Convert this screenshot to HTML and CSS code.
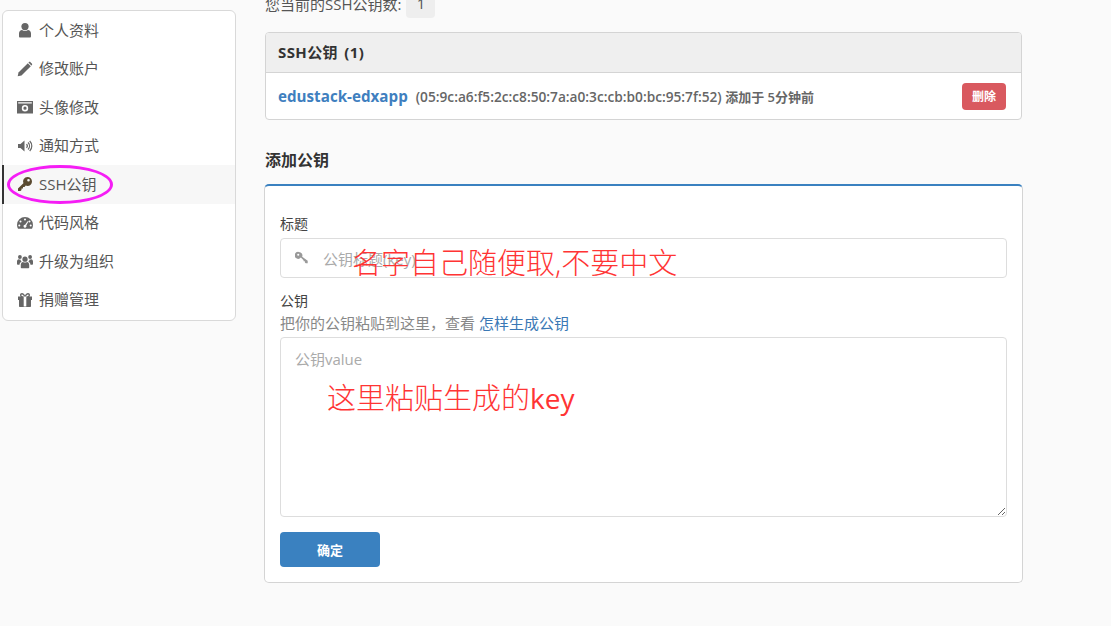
FILE: index.html
```html
<!DOCTYPE html>
<html lang="zh-CN">
<head>
  <meta charset="UTF-8" />
  <meta name="viewport" content="width=device-width, initial-scale=1.0" />
  <title>SSH公钥</title>
  <link rel="stylesheet" href="styles.css">
</head>
<body>
  <div class="container">
    <ul class="side-nav">
      <li><svg class="nav-icon" viewBox="0 0 16 16"><circle cx="8" cy="4.600" r="3.600"/><path d="M2 14.500V11.500C2 9.500 3.500 8 5 8c1.800 1.300 4.200 1.300 6 0 1.500 0 3 1.500 3 3.500v3c0 .5-.5 1-1 1H3c-.5 0-1-.5-1-1z"/></svg>个人资料</li>
      <li><svg class="nav-icon" viewBox="0 0 16 16"><path d="M1.500 11.500 10.800 2.200l3 3-9.300 9.300-3.800.8z"/><path d="M11.800 1.200c.5-.5 1.200-.5 1.700 0l1.300 1.300c.5.5.5 1.200 0 1.700l-.4.400-3-3z"/></svg>修改账户</li>
      <li><svg class="nav-icon" viewBox="0 0 16 16"><path fill-rule="evenodd" d="M0 2h16v12.500H0zM1.200 3.200v1.300h13.600V3.200zM8 6a3.200 3.200 0 1 0 0 6.400A3.200 3.200 0 0 0 8 6zm0 1.600a1.600 1.600 0 1 1 0 3.200 1.600 1.600 0 0 1 0-3.200z"/></svg>头像修改</li>
      <li><svg class="nav-icon" viewBox="0 0 16 16"><path d="M1 6h2.500L7.500 2.500v11L3.500 10H1z"/><path class="nav-wave" d="M9.500 6.200c1 1 1 2.600 0 3.600M11 4.500c2 2 2 5 0 7M12.700 3c2.800 2.800 2.800 7.200 0 10"/></svg>通知方式</li>
      <li class="active"><svg class="nav-icon" viewBox="0 0 16 16"><path fill-rule="evenodd" d="M10.500 1a4.500 4.500 0 0 1 0 9c-.7 0-1.300-.1-1.800-.4L7.500 11H6v1.500H4.500V14l-1 1H1v-2.500l5.400-5.200a4.500 4.500 0 0 1 4.100-6.300zm1 2a1.300 1.300 0 1 0 0 2.600 1.300 1.300 0 0 0 0-2.600z"/></svg>SSH公钥</li>
      <li><svg class="nav-icon" viewBox="0 0 16 16"><path fill-rule="evenodd" d="M8 2a8 8 0 0 0-8 8c0 1.400.4 2.700 1 3.800h14c.6-1.100 1-2.400 1-3.800a8 8 0 0 0-8-8zM8 3.500a1 1 0 1 1 0 2 1 1 0 0 1 0-2zM3.500 5.400a1 1 0 1 1 0 2 1 1 0 0 1 0-2zM12.500 5.400a1 1 0 1 1 0 2 1 1 0 0 1 0-2zM2.300 9.500a1 1 0 1 1 0 2 1 1 0 0 1 0-2zM13.700 9.500a1 1 0 1 1 0 2 1 1 0 0 1 0-2zM10.600 6.200l.8.400L9.300 10.500a1.500 1.500 0 1 1-1.200-.8z"/></svg>代码风格</li>
      <li><svg class="nav-icon" viewBox="0 0 16 16"><circle cx="8" cy="6.200" r="2.600"/><circle cx="2.900" cy="4" r="1.900"/><circle cx="13.100" cy="4" r="1.900"/><path d="M3.800 14.500v-2.700c0-1.700 1-2.800 2.200-2.800 1.200.8 2.800.8 4 0 1.200 0 2.200 1.100 2.200 2.800v2.700c0 .4-.3.700-.7.700H4.500c-.4 0-.7-.3-.7-.7z"/><path d="M3.400 6.500C3.500 7.500 4 8.200 4.600 8.700c-1.200.4-2 1.500-2.100 3H.8c-.5 0-.8-.3-.8-.8V8.600C0 7.300.7 6.300 1.700 6.300c.5.300 1.100.4 1.700.2zM12.600 6.500c-.1 1-.6 1.700-1.200 2.200 1.200.4 2 1.500 2.100 3h1.700c.5 0 .8-.3.800-.8V8.600c0-1.300-.7-2.300-1.700-2.300-.5.300-1.100.4-1.700.2z"/></svg>升级为组织</li>
      <li><svg class="nav-icon" viewBox="0 0 16 16"><path fill-rule="evenodd" d="M5 1c1.300 0 2.400 1.100 3 2.500C8.600 2.100 9.700 1 11 1c1.200 0 2 .8 2 1.900 0 .6-.2 1.100-.6 1.600H15v3.500h-1v6c0 .6-.4 1-1 1H3c-.6 0-1-.4-1-1V8H1V4.500h2.600C3.200 4 3 3.500 3 2.900 3 1.800 3.800 1 5 1zm0 1.500c-.5 0-.7.200-.7.500 0 .7.800 1.500 2.700 1.500-.3-1-1.100-2-2-2zm6 0c-.9 0-1.700 1-2 2 1.900 0 2.700-.8 2.700-1.500 0-.3-.2-.5-.7-.5zM6.700 4.500v10h2.600v-10z"/></svg>捐赠管理</li>
    </ul>
    <div class="main">
      <p class="key-count">您当前的SSH公钥数: <span class="count-badge">1</span></p>
      <div class="key-panel">
        <div class="key-panel-head">SSH公钥 (1)</div>
        <div class="key-row">
          <a class="key-name" href="#">edustack-edxapp</a>
          <span class="key-info">(05:9c:a6:f5:2c:c8:50:7a:a0:3c:cb:b0:bc:95:7f:52) <span class="key-time">添加于 5分钟前</span></span>
          <button class="delete-button">删除</button>
        </div>
      </div>
      <h3 class="add-title">添加公钥</h3>
      <form class="add-form">
        <label class="field-label">标题</label>
        <div class="title-input">
          <svg class="input-icon" viewBox="0 0 16 16"><path fill-rule="evenodd" d="M4.500 1a4 4 0 0 1 3.700 5.500l6.300 4.700V14h-2.200l-1-1v-1.300H9.800V10.500L6.700 7.500A4 4 0 1 1 4.500 1zM3.700 3a1.200 1.200 0 1 0 0 2.400 1.200 1.200 0 0 0 0-2.400z"/></svg>
          <span class="placeholder">公钥标题(key)</span>
        </div>
        <label class="field-label second">公钥</label>
        <div class="help-text">把你的公钥粘贴到这里，查看 <a href="#">怎样生成公钥</a></div>
        <textarea class="key-value" placeholder="公钥value"></textarea>
        <button class="save-button" type="button">确定</button>
      </form>
      <div class="note note-title">名字自己随便取,不要中文</div>
      <div class="note note-key">这里粘贴生成的<span class="note-latin">key</span></div>
    </div>
    <div class="ring"></div>
  </div>
</body>
</html>
```

FILE: styles.css
```css
html, body {
  height: 100%;
}

body {
  margin: 0;
  overflow: hidden;
  background-color: #fafafa;
  color: #555;
  font-family: "Open Sans", "Noto Sans CJK SC", sans-serif;
  font-size: 14px;
}

.container {
  display: flex;
  align-items: flex-start;
  padding: 10px 0 0 2px;
  position: relative;
}

.side-nav {
  list-style: none;
  box-sizing: border-box;
  width: 234px;
  height: 311px;
  margin: 0;
  padding: 0;
  background-color: #fff;
  border: 1px solid #d9d9d9;
  border-radius: 6px;
  flex-shrink: 0;
}

.side-nav li {
  display: flex;
  align-items: center;
  height: 38.500px;
  padding-left: 14px;
  color: #555;
  font-size: 15px;
  line-height: 1;
}

.side-nav li.active {
  background-color: #f7f7f7;
  box-shadow: inset 2px 0 0 #333;
  margin-left: -1px;
  padding-left: 15px;
}

.nav-icon {
  width: 16px;
  height: 16px;
  margin-right: 6px;
  fill: #666;
  flex-shrink: 0;
}

.active .nav-icon {
  fill: #5a4a30;
}

.nav-wave {
  fill: none;
  stroke: #666;
  stroke-width: 1.200;
}

.main {
  box-sizing: border-box;
  width: 759px;
  margin-left: 28px;
  margin-top: -21px;
  position: relative;
}

.key-count {
  display: flex;
  align-items: center;
  gap: 5px;
  height: 29px;
  margin: 0 0 14px 1px;
  font-size: 15px;
}

.count-badge {
  display: inline-block;
  width: 29px;
  height: 29px;
  line-height: 29px;
  text-align: center;
  background-color: #eee;
  border-radius: 4px;
}

.key-panel {
  margin: 0 1px;
  background-color: #fff;
  border: 1px solid #d4d4d4;
  border-radius: 4px;
}

.key-panel-head {
  height: 39px;
  line-height: 39px;
  padding-left: 12px;
  background-color: #efefef;
  border-bottom: 1px solid #d4d4d4;
  border-radius: 3px 3px 0 0;
  color: #333;
  font-size: 15px;
  font-weight: 700;
  letter-spacing: 0.400px;
  word-spacing: 2px;
}

.key-row {
  display: flex;
  align-items: center;
  height: 46px;
  padding: 0 15px 0 12px;
}

.key-name {
  color: #3f7fbf;
  font-size: 15.200px;
  font-weight: 700;
  text-decoration: none;
}

.key-info {
  margin-left: 8px;
  color: #666;
  font-size: 13.700px;
  font-weight: 600;
}

.key-time {
  font-size: 13px;
}

.delete-button {
  margin-left: auto;
  width: 44px;
  height: 27px;
  padding: 0;
  border: none;
  border-radius: 4px;
  background-color: #d9595f;
  color: #fff;
  font-family: inherit;
  font-size: 12px;
  font-weight: 700;
}

.add-title {
  margin: 28px 0 12px 1px;
  height: 24px;
  line-height: 24px;
  color: #333;
  font-size: 16px;
  font-weight: 700;
}

.add-form {
  box-sizing: border-box;
  height: 399px;
  padding: 28px 15px 0;
  background-color: #fff;
  border: 1px solid #d4d4d4;
  border-top: 2px solid #3a81c0;
  border-radius: 5px;
}

.field-label {
  display: block;
  height: 20px;
  line-height: 20px;
  color: #444;
  font-size: 14px;
}

.field-label.second {
  margin-top: 13px;
}

.title-input {
  display: flex;
  align-items: center;
  box-sizing: border-box;
  height: 40px;
  margin-top: 4px;
  padding-left: 14px;
  border: 1px solid #ddd;
  border-radius: 4px;
}

.input-icon {
  width: 14px;
  height: 14px;
  fill: #999;
  margin-right: 14px;
}

.placeholder {
  color: #aaa;
  font-size: 15px;
}

.help-text {
  height: 22px;
  line-height: 22px;
  margin-top: 1px;
  color: #888;
  font-size: 15px;
}

.help-text a {
  color: #3a78b5;
  text-decoration: none;
}

.key-value {
  display: block;
  box-sizing: border-box;
  width: 100%;
  height: 180px;
  margin-top: 3px;
  padding: 10px 14px;
  border: 1px solid #ddd;
  border-radius: 4px;
  font-family: inherit;
  font-size: 15px;
  outline: none;
}

.key-value::placeholder {
  color: #aaa;
}

.save-button {
  display: block;
  width: 100px;
  height: 35px;
  margin-top: 15px;
  padding: 0;
  border: none;
  border-radius: 4px;
  background-color: #3a81c0;
  color: #fff;
  font-family: inherit;
  font-size: 13px;
  font-weight: 700;
}

/* annotations drawn on top of the screenshot */
.note {
  position: absolute;
  color: #ff3434;
  font-size: 29px;
  font-weight: 300;
  line-height: 1.200;
  white-space: nowrap;
}

.note-latin {
  font-size: 28px;
  font-weight: 500;
}

.note-title {
  left: 88px;
  top: 257px;
}

.note-key {
  left: 63px;
  top: 392px;
}

.ring {
  position: absolute;
  box-sizing: border-box;
  left: 7px;
  top: 165px;
  width: 106px;
  height: 39px;
  border: 3px solid #f51df5;
  border-radius: 50%;
}
```
